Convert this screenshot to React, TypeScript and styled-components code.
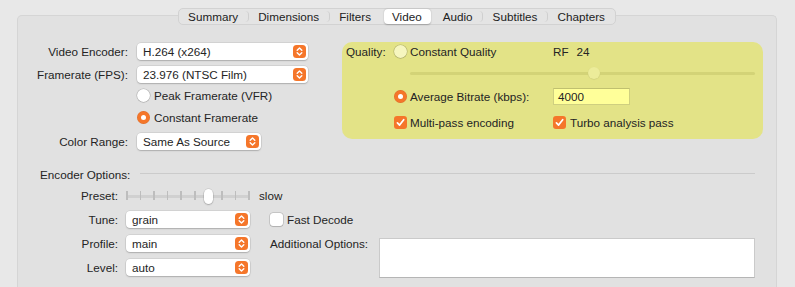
import React from 'react';
import styled, { createGlobalStyle } from 'styled-components';

const ACCENT = '#f5762a';

const GlobalStyle = createGlobalStyle`
    body {
        margin: 0;
        background: #e8e8e8;
        font-family: "Liberation Sans", Arial, sans-serif;
        font-size: 11.7px;
        color: #242424;
    }
`

const Window = styled.div`
    height: 287px;
    box-sizing: border-box;
    padding: 15px 18px 0 17px;
    overflow: hidden;
`

const Panel = styled.div`
    background: #e1e1e1;
    border: 1px solid #d5d5d5;
    border-bottom: none;
    border-radius: 5px 5px 0 0;
    height: 290px;
    display: flex;
    flex-direction: column;
`

const TabBar = styled.div`
    display: flex;
    align-items: center;
    width: max-content;
    height: 17px;
    margin: -8px auto 0;
    background: #e4e4e4;
    border: 1px solid #d2d2d2;
    border-radius: 5px;
    box-sizing: border-box;
`

const Tab = styled.div<{ $active?: boolean; $divider?: boolean }>`
    padding: 0 ${(p) => (p.$active ? '8.5px' : '9.5px')};
    margin: 0 ${(p) => (p.$active ? '2px' : '0')};
    height: ${(p) => (p.$active ? '15px' : '11px')};
    line-height: ${(p) => (p.$active ? '15px' : '11px')};
    background: ${(p) => (p.$active ? '#ffffff' : 'transparent')};
    border-radius: 4px;
    box-shadow: ${(p) => (p.$active ? '0 0.5px 1.5px rgba(0,0,0,0.25)' : 'none')};
    border-right: ${(p) => (p.$divider ? '1px solid #cfcfcf' : '1px solid transparent')};
    color: #222;
`

const TopSection = styled.div`
    display: flex;
    align-items: flex-start;
    margin-top: 15px;
`

const LeftForm = styled.div`
    display: grid;
    grid-template-columns: 110px 1fr;
    grid-template-rows: 23px 22px 21px 23px 24px;
    column-gap: 9px;
    width: 324px;
    align-items: center;
`

const Label = styled.div`
    text-align: right;
    white-space: nowrap;
`

const Popup = styled.div<{ $width: number }>`
    position: relative;
    width: ${(p) => p.$width}px;
    height: 17px;
    box-sizing: border-box;
    background: #fff;
    border-radius: 4px;
    box-shadow: 0 0 0 0.5px rgba(0,0,0,0.12), 0 1px 1.5px rgba(0,0,0,0.18);
    display: flex;
    align-items: center;
    padding-left: 6px;
    white-space: nowrap;
`

const PopupArrows = styled.div`
    position: absolute;
    right: 2px;
    top: 2px;
    width: 13px;
    height: 13px;
    border-radius: 3.5px;
    background: ${ACCENT};
    display: flex;
`

const OptionRow = styled.div<{ $col?: number }>`
    display: flex;
    align-items: center;
    gap: 4px;
    white-space: nowrap;
    grid-column: ${(p) => p.$col || 'auto'};
`

const Radio = styled.div<{ $on?: boolean; $tint?: string }>`
    width: 13px;
    height: 13px;
    border-radius: 50%;
    box-sizing: border-box;
    flex: none;
    background: ${(p) => (p.$on ? ACCENT : p.$tint || '#fff')};
    box-shadow: ${(p) => (p.$on ? 'inset 0 0 0 0.5px rgba(0,0,0,0.1)' : '0 0 0 0.5px rgba(0,0,0,0.2), 0 0.5px 1px rgba(0,0,0,0.15)')};
    display: flex;
    align-items: center;
    justify-content: center;
    &::after {
        content: '';
        display: ${(p) => (p.$on ? 'block' : 'none')};
        width: 5px;
        height: 5px;
        border-radius: 50%;
        background: #fff;
    }
`

const Check = styled.div<{ $on?: boolean }>`
    width: 13px;
    height: 13px;
    border-radius: 3px;
    box-sizing: border-box;
    flex: none;
    background: ${(p) => (p.$on ? ACCENT : '#fff')};
    box-shadow: ${(p) => (p.$on ? 'none' : '0 0 0 0.5px rgba(0,0,0,0.22), 0 0.5px 1px rgba(0,0,0,0.12)')};
    display: flex;
`

const QualityBox = styled.div`
    margin-top: 2px;
    width: 421px;
    box-sizing: border-box;
    padding: 0 8px 2px 4px;
    background: #e3e387;
    border-radius: 10px;
    display: grid;
    grid-template-columns: 48px 16px 143px 1fr;
    grid-template-rows: 19px 24px 22px 30px;
    align-items: center;
`

const RF = styled.div`
    display: flex;
    gap: 8px;
`

const QualitySlider = styled.div`
    grid-column: 3 / 5;
    position: relative;
    height: 14px;
    display: flex;
    align-items: center;
`

const QualityTrack = styled.div`
    flex: 1;
    height: 3px;
    border-radius: 2px;
    background: #d3d377;
`

const QualityKnob = styled.div`
    position: absolute;
    top: 1px;
    width: 12px;
    height: 12px;
    border-radius: 50%;
    background: #ecec9a;
    box-shadow: 0 0.5px 1px rgba(0,0,0,0.12);
`

const BitrateInput = styled.div`
    width: 77px;
    height: 17px;
    box-sizing: border-box;
    background: #ffff99;
    border: 1px solid #cfcf80;
    border-top-color: #c0c070;
    padding-left: 4px;
    display: flex;
    align-items: center;
`

const SectionHeader = styled.div`
    display: flex;
    align-items: center;
    height: 19px;
    margin-top: 12px;
    padding-left: 22px;
    margin-right: 21px;
`

const Rule = styled.div`
    flex: 1;
    height: 1px;
    background: #cbcbcb;
    margin-left: 10px;
    margin-top: -2px;
`

const EncoderGrid = styled.div`
    display: grid;
    grid-template-columns: 108px 124px 129px 376px;
    grid-template-rows: 23px 24px 24px 24px;
    align-items: center;
`

const EncLabel = styled(Label)`
    padding-right: 8px;
`

const PresetSlider = styled.div`
    position: relative;
    width: 124px;
    height: 14px;
    display: flex;
    align-items: center;
    justify-content: space-between;
`

const PresetTrack = styled.div`
    position: absolute;
    left: 0;
    right: 0;
    top: 6px;
    height: 3px;
    border-radius: 1px;
    background: #d0d0d0;
`

const Tick = styled.div`
    position: relative;
    width: 1.5px;
    height: 9px;
    background: #bdbdbd;
`

const PresetKnob = styled.div`
    position: absolute;
    top: 0;
    width: 9px;
    height: 15px;
    border-radius: 5px;
    background: #fff;
    box-shadow: 0 0 0 0.5px rgba(0,0,0,0.15), 0 1px 1.5px rgba(0,0,0,0.2);
`

const SliderRow = styled.div`
    display: flex;
    align-items: center;
    gap: 9px;
    grid-column: 2 / 4;
`

const RightCell = styled.div`
    padding-left: 20px;
`

const TextArea = styled.div`
    grid-column: 4;
    grid-row: 3 / 5;
    align-self: start;
    margin-top: 7px;
    height: 40px;
    box-sizing: border-box;
    background: #fff;
    border: 1px solid #cacaca;
    border-bottom-color: #b5b5b5;
`

function Arrows(): JSX.Element {
    return (
        <PopupArrows>
            <svg width="13" height="13" viewBox="0 0 13 13">
                <path d="M4.2 5.3 L6.5 3.1 L8.8 5.3 M4.2 7.7 L6.5 9.9 L8.8 7.7"
                    fill="none" stroke="#fff" strokeWidth="1.4"
                    strokeLinecap="round" strokeLinejoin="round" />
            </svg>
        </PopupArrows>
    )
}

function PopupButton({value, width}: {value: string, width: number}): JSX.Element {
    return (
        <Popup $width={width}>
            {value}
            <Arrows />
        </Popup>
    )
}

function CheckBox({on}: {on?: boolean}): JSX.Element {
    return (
        <Check $on={on}>
            {on && (
                <svg width="13" height="13" viewBox="0 0 13 13">
                    <path d="M3.4 6.9 L5.6 9.1 L9.7 3.7" fill="none" stroke="#fff"
                        strokeWidth="1.7" strokeLinecap="round" strokeLinejoin="round" />
                </svg>
            )}
        </Check>
    )
}

const TABS = ['Summary', 'Dimensions', 'Filters', 'Video', 'Audio', 'Subtitles', 'Chapters'];
const ACTIVE_TAB = 'Video';

function Tabs(): JSX.Element {
    return (
        <TabBar>
            {TABS.map((t, i) => {
                const next = TABS[i + 1];
                const divider = i < TABS.length - 1 && t !== ACTIVE_TAB && next !== ACTIVE_TAB;
                return <Tab $active={t === ACTIVE_TAB} $divider={divider} key={`tab-${i}`}>{t}</Tab>
            })}
        </TabBar>
    )
}

function Quality(): JSX.Element {
    const rf = 24;
    const knobPos = 184 - 6 + (rf - 24) * 6;
    return (
        <QualityBox>
            <div>Quality:</div>
            <Radio $tint="#f6f6bf" />
            <div>Constant Quality</div>
            <RF><span>RF</span><span>{rf}</span></RF>

            <div />
            <div />
            <QualitySlider>
                <QualityTrack />
                <QualityKnob style={{left: knobPos}} />
            </QualitySlider>

            <div />
            <Radio $on />
            <div>Average Bitrate (kbps):</div>
            <BitrateInput>4000</BitrateInput>

            <div />
            <CheckBox on />
            <div>Multi-pass encoding</div>
            <OptionRow><CheckBox on />Turbo analysis pass</OptionRow>
        </QualityBox>
    )
}

function Preset(): JSX.Element {
    const presets = ['ultrafast', 'superfast', 'veryfast', 'faster', 'fast', 'medium', 'slow', 'slower', 'veryslow', 'placebo'];
    const index = presets.indexOf('slow');
    const step = 123 / (presets.length - 1);
    return (
        <SliderRow>
            <PresetSlider>
                <PresetTrack />
                {presets.map((p, i) => <Tick key={`tick-${i}`} />)}
                <PresetKnob style={{left: index * step - 4}} />
            </PresetSlider>
            <span>{presets[index]}</span>
        </SliderRow>
    )
}

export default function App(): JSX.Element {
    return (
        <Window>
            <GlobalStyle />
            <Panel>
                <Tabs />
                <TopSection>
                    <LeftForm>
                        <Label>Video Encoder:</Label>
                        <PopupButton value="H.264 (x264)" width={171} />
                        <Label>Framerate (FPS):</Label>
                        <PopupButton value="23.976 (NTSC Film)" width={171} />
                        <OptionRow $col={2}><Radio />Peak Framerate (VFR)</OptionRow>
                        <OptionRow $col={2}><Radio $on />Constant Framerate</OptionRow>
                        <Label>Color Range:</Label>
                        <PopupButton value="Same As Source" width={124} />
                    </LeftForm>
                    <Quality />
                </TopSection>

                <SectionHeader>
                    Encoder Options:
                    <Rule />
                </SectionHeader>

                <EncoderGrid>
                    <EncLabel>Preset:</EncLabel>
                    <Preset />
                    <div />

                    <EncLabel>Tune:</EncLabel>
                    <PopupButton value="grain" width={124} />
                    <RightCell><OptionRow><CheckBox />Fast Decode</OptionRow></RightCell>
                    <div />

                    <EncLabel>Profile:</EncLabel>
                    <PopupButton value="main" width={124} />
                    <RightCell>Additional Options:</RightCell>
                    <TextArea />

                    <EncLabel>Level:</EncLabel>
                    <PopupButton value="auto" width={124} />
                    <div />
                </EncoderGrid>
            </Panel>
        </Window>
    )
}
